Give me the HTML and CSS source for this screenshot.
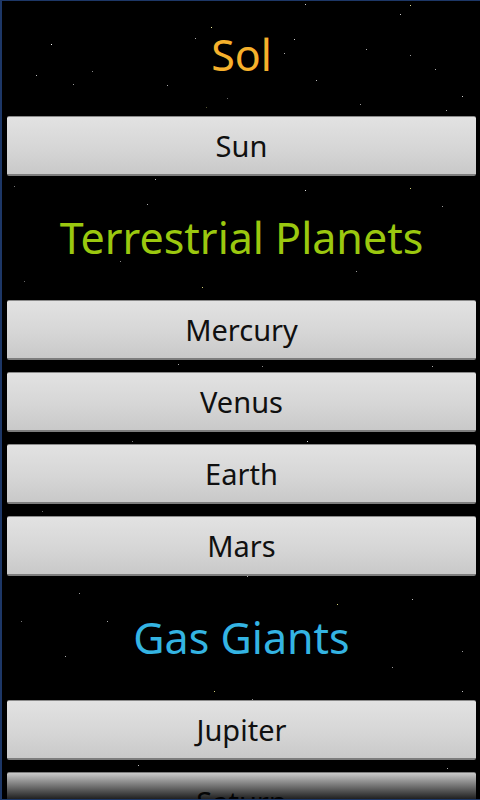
FILE: index.html
```html
<!DOCTYPE html>
<html lang="en">
<head>
    <meta charset="UTF-8">
    <meta name="viewport" content="width=device-width, initial-scale=1.0">
    <title>Solar System</title>
    <link rel="stylesheet" href="styles.css">
</head>
<body>
    <div class="screen">
        <div class="stars"></div>

        <div class="list">
            <!-- Sol -->
            <h1 class="group sol">Sol</h1>
            <div class="planets">
                <button class="planet">Sun</button>
            </div>

            <!-- Terrestrial -->
            <h1 class="group terrestrial">Terrestrial Planets</h1>
            <div class="planets">
                <button class="planet">Mercury</button>
                <button class="planet">Venus</button>
                <button class="planet">Earth</button>
                <button class="planet">Mars</button>
            </div>

            <!-- Gas giants -->
            <h1 class="group giants">Gas Giants</h1>
            <div class="planets">
                <button class="planet">Jupiter</button>
                <button class="planet">Saturn</button>
            </div>
        </div>

        <div class="fade"></div>
    </div>
</body>
</html>
```

FILE: styles.css
```css
/* Global Styles */
body {
    margin: 0;
    padding: 0;
    background: #000;
    font-family: 'Noto Sans', 'Open Sans', sans-serif;
}

.screen {
    position: relative;
    width: 478px;
    height: 798px;
    border-top: 1px solid #1d3767;
    border-bottom: 1px solid #1d3767;
    border-left: 2px solid #1d3767;
    background: #000;
    overflow: hidden;
}

/* Star field */
.stars {
    position: absolute;
    top: 0;
    left: 0;
    width: 1px;
    height: 1px;
    background: transparent;
    box-shadow:
        303px 3px #ccc, 408px 4px #dd9, 398px 13px #ccc, 209px 26px #ee9,
        49px 43px #fff, 292px 38px #ccc, 193px 37px #aaa, 364px 48px #aaa,
        408px 54px #999, 282px 52px #aaa, 34px 74px #bbb, 90px 70px #888,
        71px 83px #999, 165px 84px #aaa, 314px 79px #bbb, 358px 103px #999,
        433px 68px #aaa, 460px 95px #ccc, 444px 109px #aaa, 204px 106px #553,
        225px 97px #666, 153px 178px #bbb, 303px 189px #ddd, 408px 187px #cc7,
        12px 185px #777, 145px 203px #aaa, 118px 260px #888, 354px 270px #999,
        410px 230px #bbb, 440px 205px #999, 22px 280px #666, 200px 286px #cc7,
        305px 440px #ddd, 176px 363px #aaa, 430px 365px #aaa, 77px 592px #999,
        245px 575px #aaa, 410px 598px #bbb, 335px 603px #cc7, 19px 620px #777,
        63px 655px #aaa, 390px 666px #999, 460px 690px #bbb, 212px 690px #cc7,
        136px 764px #bbb, 445px 767px #aaa, 250px 698px #888, 105px 620px #aaa,
        460px 650px #999, 130px 440px #777, 260px 365px #888, 40px 510px #666;
}

.list {
    position: relative;
    display: flex;
    flex-direction: column;
    padding: 0 4px 0 5px;
}

/* Section headings */
.group {
    margin: 0;
    text-align: center;
    font-weight: normal;
    font-size: 43px;
    line-height: 60px;
    padding: 24px 0 31px;
}

.planets + .group {
    padding-top: 32px;
    padding-bottom: 32px;
}

.sol {
    color: #f6b12c;
}

.terrestrial {
    color: #9bc80f;
}

.giants {
    color: #34b4e3;
}

/* Buttons */
.planets {
    display: flex;
    flex-direction: column;
    gap: 12px;
}

.planet {
    height: 60px;
    width: 100%;
    border: none;
    border-top: 1px solid #8a8a8a;
    border-bottom: 2px solid #7d7d7d;
    border-radius: 2px;
    background: linear-gradient(to bottom, #e2e2e2, #d6d6d6 55%, #c9c9c9);
    color: #101010;
    font-family: 'Noto Sans', 'Open Sans', sans-serif;
    font-size: 29px;
    padding: 0;
}

/* Scroll edge fade */
.fade {
    position: absolute;
    left: 0;
    right: 0;
    bottom: 0;
    height: 30px;
    background: linear-gradient(to bottom, rgba(0, 0, 0, 0), rgba(0, 0, 0, 0.85));
}
```
